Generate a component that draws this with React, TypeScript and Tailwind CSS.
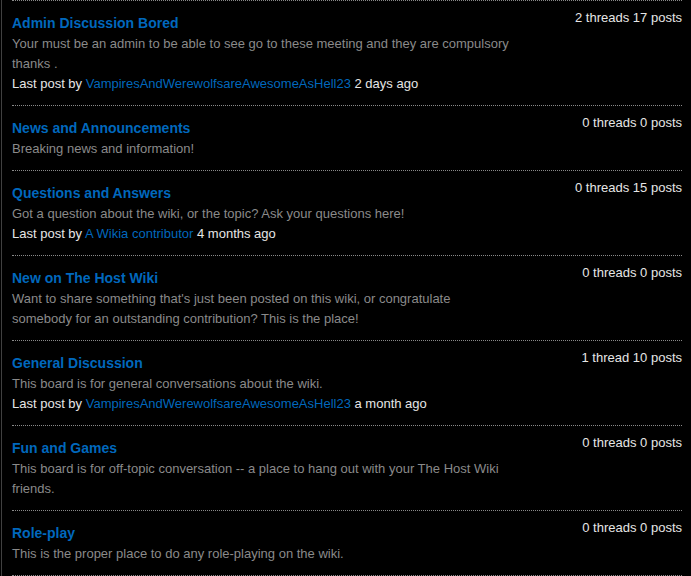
import type { ReactNode } from "react";

type Board = {
  title: string;
  desc: string;
  counts: string;
  last?: { user: string; when: string };
};

const boards: Board[] = [
  {
    title: "Admin Discussion Bored",
    desc: "Your must be an admin to be able to see go to these meeting and they are compulsory thanks .",
    counts: "2 threads 17 posts",
    last: { user: "VampiresAndWerewolfsareAwesomeAsHell23", when: "2 days ago" },
  },
  { title: "News and Announcements", desc: "Breaking news and information!", counts: "0 threads 0 posts" },
  {
    title: "Questions and Answers",
    desc: "Got a question about the wiki, or the topic? Ask your questions here!",
    counts: "0 threads 15 posts",
    last: { user: "A Wikia contributor", when: "4 months ago" },
  },
  {
    title: "New on The Host Wiki",
    desc: "Want to share something that's just been posted on this wiki, or congratulate somebody for an outstanding contribution? This is the place!",
    counts: "0 threads 0 posts",
  },
  {
    title: "General Discussion",
    desc: "This board is for general conversations about the wiki.",
    counts: "1 thread 10 posts",
    last: { user: "VampiresAndWerewolfsareAwesomeAsHell23", when: "a month ago" },
  },
  {
    title: "Fun and Games",
    desc: "This board is for off-topic conversation -- a place to hang out with your The Host Wiki friends.",
    counts: "0 threads 0 posts",
  },
  {
    title: "Role-play",
    desc: "This is the proper place to do any role-playing on the wiki.",
    counts: "0 threads 0 posts",
  },
];

function Row({ b, last }: { b: Board; last: boolean }): ReactNode {
  return (
    <li
      className={`flex justify-between border-t border-dotted border-[#8a8a8a] pt-[12px] pb-[11px] ${
        last ? "border-b" : ""
      }`}
    >
      <div className="w-[500px]">
        <a className="block mb-px text-[14px] leading-5 font-bold text-[#0068bd]">{b.title}</a>
        <p className="text-[13px] leading-5 text-[#8a8a8a]">{b.desc}</p>
        {b.last && (
          <p className="text-[13px] leading-5 text-[#e6e6e6]">
            Last post by <a className="text-[#0068bd]">{b.last.user}</a> {b.last.when}
          </p>
        )}
      </div>
      <div className="-mt-[5px] text-[13px] leading-5 text-[#e6e6e6] whitespace-nowrap">{b.counts}</div>
    </li>
  );
}

export default function App() {
  return (
    <div className="h-[576px] bg-black overflow-hidden font-['Liberation_Sans',Arial,sans-serif]">
      <div className="ml-px h-full border-l border-[#404040] pl-[10px] pr-[9px]">
        <ul>
          {boards.map((b, i) => (
            <Row key={b.title} b={b} last={i === boards.length - 1} />
          ))}
        </ul>
      </div>
    </div>
  );
}
